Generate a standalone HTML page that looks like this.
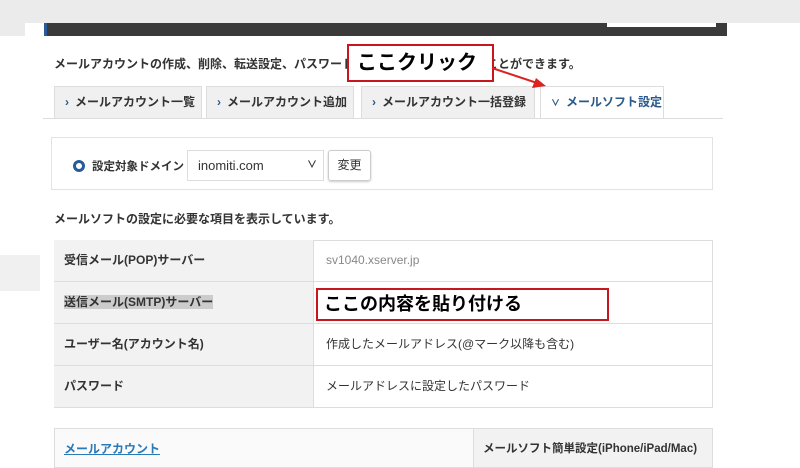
<!DOCTYPE html><html><head><meta charset="utf-8"><style>
body{margin:0;width:800px;height:458px;overflow:hidden;background:#fff;position:relative;font-family:"Liberation Sans","Noto Sans CJK JP",sans-serif;color:#333;font-size:12px}
.a{position:absolute}
.tab{position:absolute;top:86px;height:32px;background:#f0f0f0;border:1px solid #ddd;border-bottom:none;box-sizing:border-box;line-height:31px;padding-left:10px;font-weight:bold;color:#333}
.tab b{color:#2a5a8a;margin-right:6px}
.row{position:absolute;left:54px;width:659px;height:42px;border-bottom:1px solid #ddd;box-sizing:border-box}
.row .l{position:absolute;left:0;top:0;width:259px;height:41px;background:#f2f2f2;line-height:41px;padding-left:10px;box-sizing:border-box;font-weight:bold}
.row .r{position:absolute;left:259px;top:0;right:0;height:41px;line-height:41px;padding-left:12px;border-left:1px solid #ddd}
.red{position:absolute;border:2px solid #c8161e;background:#fff;box-sizing:border-box;font-weight:bold;color:#000}
</style></head><body>
<div class="a" style="left:0;top:0;width:800px;height:23px;background:#ebebeb"></div>
<div class="a" style="left:0;top:23px;width:25px;height:13px;background:#ebebeb"></div>
<div class="a" style="left:0;top:255px;width:40px;height:36px;background:#f0f0f0"></div>
<div class="a" style="left:44px;top:23px;width:683px;height:13px;background:#3a3a3a"></div>
<div class="a" style="left:44px;top:23px;width:3px;height:13px;background:#2a5a9a"></div>
<div class="a" style="left:607px;top:23px;width:109px;height:4px;background:#fff"></div>
<div class="a" style="left:54px;top:55px;font-weight:bold;font-size:12px">メールアカウントの作成、削除、転送設定、パスワード変更、設定の確認を行うことができます。</div>
<div class="tab" style="left:54px;width:148px"><b>›</b>メールアカウント一覧</div>
<div class="tab" style="left:206px;width:148px"><b>›</b>メールアカウント追加</div>
<div class="tab" style="left:361px;width:174px"><b>›</b>メールアカウント一括登録</div>
<div class="tab" style="left:540px;width:124px;background:#fff;height:33px;color:#2a5a8a"><b style="font-size:9px">∨</b>メールソフト設定</div>
<div class="a" style="left:43px;top:118px;width:680px;height:1px;background:#ddd"></div>
<div class="red" style="left:347px;top:44px;width:147px;height:38px;font-size:20px;line-height:34px;padding-left:8px">ここクリック</div>
<svg class="a" style="left:490px;top:66px" width="60" height="24"><line x1="2" y1="2" x2="50" y2="18" stroke="#d22" stroke-width="2"/><polygon points="56,20 42,22 46,12" fill="#d22"/></svg>
<div class="a" style="left:51px;top:137px;width:662px;height:53px;border:1px solid #e3e3e3;box-sizing:border-box"></div>
<div class="a" style="left:73px;top:160px;width:6px;height:6px;border:3px solid #2a5a9a;border-radius:50%"></div>
<div class="a" style="left:92px;top:158px;font-weight:bold;font-size:11.5px">設定対象ドメイン</div>
<div class="a" style="left:187px;top:150px;width:137px;height:31px;border:1px solid #ddd;box-sizing:border-box;line-height:29px;padding-left:10px;font-size:13px">inomiti.com<span style="position:absolute;right:6px;font-size:10px;font-weight:bold">∨</span></div>
<div class="a" style="left:328px;top:150px;width:43px;height:31px;border:1px solid #ccc;border-radius:3px;box-sizing:border-box;line-height:29px;text-align:center;box-shadow:0 1px 2px #ccc">変更</div>
<div class="a" style="left:54px;top:210px;font-weight:bold">メールソフトの設定に必要な項目を表示しています。</div>
<div class="a" style="left:54px;top:240px;width:659px;height:168px;border:1px solid #ddd;box-sizing:border-box"></div>
<div class="row" style="top:240px"><div class="l">受信メール(POP)サーバー</div><div class="r" style="color:#888">sv1040.xserver.jp</div></div>
<div class="row" style="top:282px"><div class="l"><span style="background:#ccc">送信メール(SMTP)サーバー</span></div><div class="r"></div></div>
<div class="row" style="top:324px"><div class="l">ユーザー名(アカウント名)</div><div class="r">作成したメールアドレス(@マーク以降も含む)</div></div>
<div class="row" style="top:366px;border:none"><div class="l">パスワード</div><div class="r">メールアドレスに設定したパスワード</div></div>
<div class="red" style="left:316px;top:288px;width:293px;height:33px;font-size:18px;line-height:29px;padding-left:6px">ここの内容を貼り付ける</div>
<div class="a" style="left:54px;top:428px;width:659px;height:40px;border:1px solid #ddd;box-sizing:border-box;background:#fafafa"></div>
<div class="a" style="left:473px;top:428px;width:240px;height:40px;background:#f2f2f2;border:1px solid #ddd;box-sizing:border-box"></div>
<div class="a" style="left:64px;top:440px;color:#2a7ab8;text-decoration:underline;font-weight:bold">メールアカウント</div>
<div class="a" style="left:483px;top:440px;font-weight:bold;font-size:11.5px">メールソフト簡単設定(iPhone/iPad/Mac)</div>
</body></html>
